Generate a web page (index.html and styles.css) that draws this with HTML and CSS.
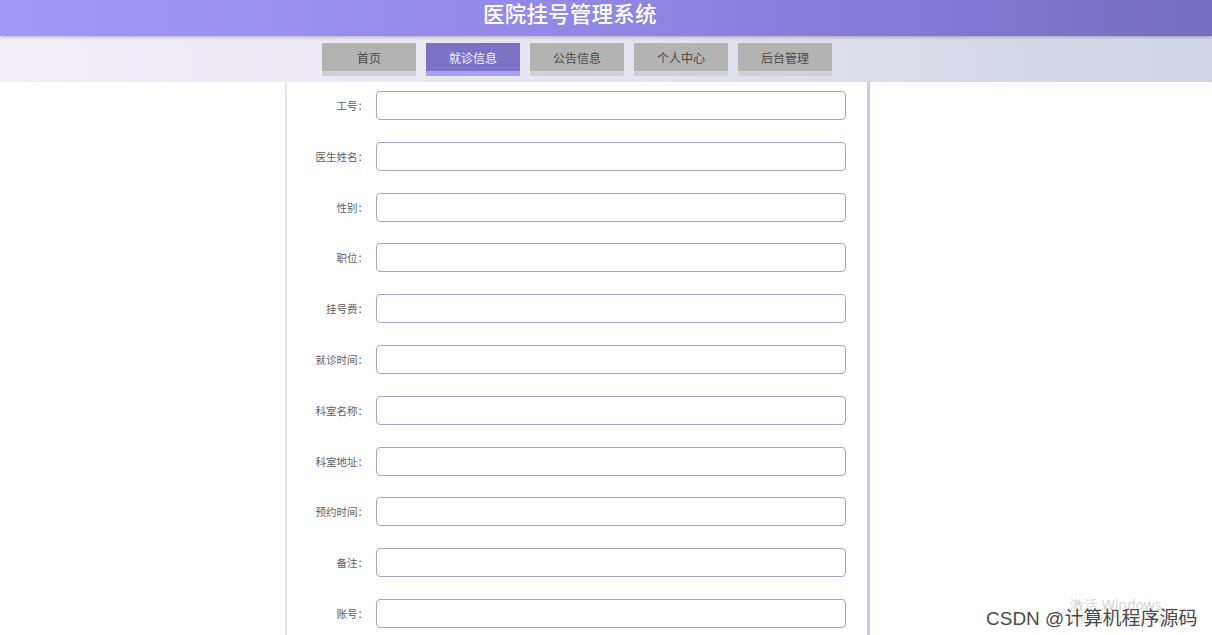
FILE: index.html
```html
<!DOCTYPE html>
<html lang="zh">
<head>
<meta charset="utf-8">
<title>医院挂号管理系统</title>
<link rel="stylesheet" href="styles.css">
</head>
<body>
<header class="topbar">
  <h1 class="title">医院挂号管理系统</h1>
</header>
<nav class="navbar">
  <div class="nav-inner">
    <a class="nav-btn">首页</a>
    <a class="nav-btn active">就诊信息</a>
    <a class="nav-btn">公告信息</a>
    <a class="nav-btn">个人中心</a>
    <a class="nav-btn">后台管理</a>
  </div>
</nav>
<main class="panel">
  <form class="form">
    <div class="row"><label class="label">工号：</label><input class="input" type="text"></div>
    <div class="row"><label class="label">医生姓名：</label><input class="input" type="text"></div>
    <div class="row"><label class="label">性别：</label><input class="input" type="text"></div>
    <div class="row"><label class="label">职位：</label><input class="input" type="text"></div>
    <div class="row"><label class="label">挂号费：</label><input class="input" type="text"></div>
    <div class="row"><label class="label">就诊时间：</label><input class="input" type="text"></div>
    <div class="row"><label class="label">科室名称：</label><input class="input" type="text"></div>
    <div class="row"><label class="label">科室地址：</label><input class="input" type="text"></div>
    <div class="row"><label class="label">预约时间：</label><input class="input" type="text"></div>
    <div class="row"><label class="label">备注：</label><input class="input" type="text"></div>
    <div class="row"><label class="label">账号：</label><input class="input" type="text"></div>
  </form>
</main>
<div class="win-mark"><span class="win-1">激活 Windows</span><span class="win-2">转到“设置”以激活 Windows。</span></div>
<div class="csdn">CSDN @计算机程序源码</div>
</body>
</html>
```
FILE: styles.css
```css
* { box-sizing: border-box; }
html, body {
  margin: 0;
  padding: 0;
  height: 635px;
  overflow: hidden;
  background: #ffffff;
  font-family: "Noto Sans CJK SC", "Noto Sans", sans-serif;
}
.topbar {
  position: relative;
  z-index: 2;
  height: 36px;
  background: linear-gradient(90deg, #a197f7 0%, #968bea 40%, #8479d4 75%, #766ebf 100%);
  box-shadow: 0 1px 3px rgba(60, 50, 110, 0.35);
}
.title {
  margin: 0;
  padding-left: 483px;
  font-size: 21.5px;
  font-weight: 500;
  line-height: 25px;
  color: #ffffff;
  letter-spacing: 0.2px;
}
.navbar {
  height: 46px;
  background: linear-gradient(90deg, #f3eff9 0%, #e9e7f2 40%, #dcdde9 70%, #cfd6e2 100%);
}
.nav-inner {
  display: flex;
  gap: 10px;
  padding-left: 322px;
  padding-top: 7px;
}
.nav-btn {
  display: flex;
  align-items: center;
  justify-content: center;
  width: 94px;
  height: 33px;
  background: #b3b3b3;
  border-bottom: 5px solid #d2d2d4;
  background-clip: padding-box;
  color: #4a4a4a;
  font-size: 12px;
  cursor: pointer;
}
.nav-btn.active {
  background: #7b72c6;
  background-clip: padding-box;
  border-bottom-color: #a99ff7;
  color: #f2f0ff;
}
.panel {
  margin-left: 285px;
  width: 585px;
  height: 553px;
  border-left: 2px solid #e7e5f2;
  border-right: 3px solid #cdc9ec;
  background: #ffffff;
  padding-top: 9px;
}
.form {
  display: flex;
  flex-direction: column;
  gap: 21.8px;
}
.row {
  display: flex;
  align-items: center;
  height: 29px;
}
.label {
  width: 81px;
  margin-right: 8px;
  text-align: right;
  font-size: 10.5px;
  color: #5e5e5e;
  white-space: nowrap;
}
.input {
  width: 470px;
  height: 29px;
  border: 1px solid #a9a5c6;
  border-radius: 4px;
  background: #ffffff;
  outline: none;
}
.win-mark {
  position: absolute;
  left: 1070px;
  top: 598px;
  display: flex;
  flex-direction: column;
  color: rgba(120, 120, 120, 0.35);
  font-family: "Noto Sans", sans-serif;
  line-height: 14px;
}
.win-1 { font-size: 14px; }
.win-2 { font-size: 10px; }
.csdn {
  position: absolute;
  left: 986px;
  top: 603px;
  font-family: "Liberation Sans", "Noto Sans CJK SC", sans-serif;
  font-size: 19px;
  color: #4a4a4a;
  text-shadow: 0 0 2px #ffffff, 0 0 2px #ffffff;
}
```
